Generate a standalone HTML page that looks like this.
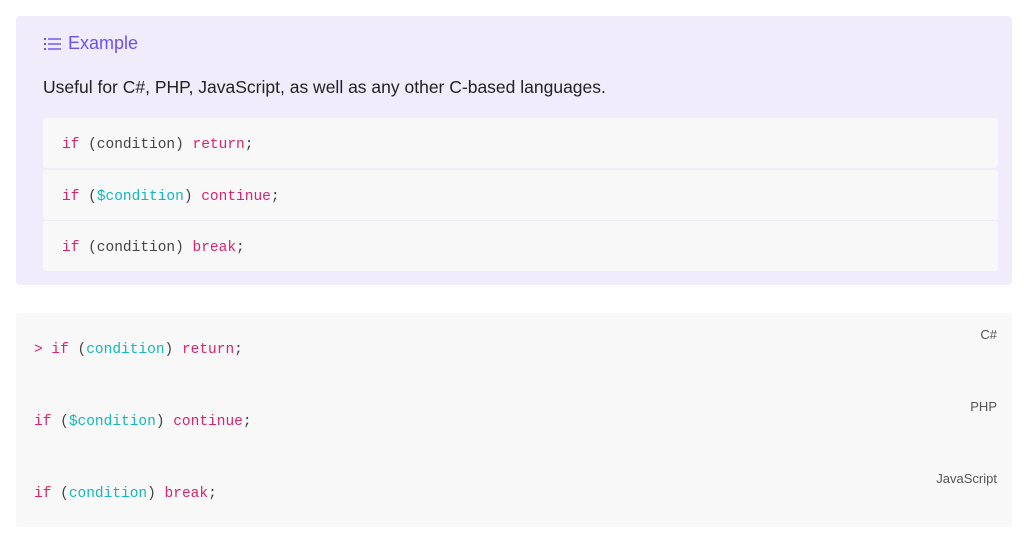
<!DOCTYPE html>
<html><head><style>
body{margin:0;background:#fff;width:1024px;height:541px;overflow:hidden;font-family:"Liberation Sans",sans-serif;}
.adm{position:absolute;left:16px;top:16px;width:996px;height:269px;background:#f0ecfb;border-radius:4px;}
.title{position:absolute;left:28px;top:17px;font-size:18px;color:#6e4ff0;display:flex;align-items:center;gap:6px;}
.p{position:absolute;left:27px;top:61px;font-size:17.5px;color:#222;}
.cb{position:absolute;left:27px;width:955px;height:50px;background:#f8f8f8;border-radius:3px;}
.mono{font-family:"Liberation Mono",monospace;font-size:14.5px;white-space:pre;}
.cb .mono{position:absolute;left:19px;top:19px;}
.k{color:#d6246e}.d{color:#444}.c{color:#14b8b8}
.box{position:absolute;left:16px;top:313px;width:996px;height:214px;background:#f8f8f8;border-radius:4px;}
.row{position:absolute;left:0;width:996px;height:71px;}
.row .mono{position:absolute;left:18px;top:29px;}
.lab{position:absolute;right:15px;top:14px;font-size:13px;color:#555;}
</style></head><body>
<div class="adm">
 <div class="title"><svg width="18" height="14" viewBox="0 0 18 14"><g fill="#6e4ff0"><rect x="0" y="1" width="2" height="2"/><rect x="0" y="6" width="2" height="2"/><rect x="0" y="11" width="2" height="2"/><rect x="4" y="1.3" width="13" height="1.4"/><rect x="4" y="6.3" width="13" height="1.4"/><rect x="4" y="11.3" width="13" height="1.4"/></g></svg>Example</div>
 <div class="p">Useful for C#, PHP, JavaScript, as well as any other C-based languages.</div>
 <div class="cb" style="top:102px"><span class="mono"><span class="k">if</span><span class="d"> (condition) </span><span class="k">return</span><span class="d">;</span></span></div>
 <div class="cb" style="top:154px"><span class="mono"><span class="k">if</span><span class="d"> (</span><span class="c">$condition</span><span class="d">) </span><span class="k">continue</span><span class="d">;</span></span></div>
 <div class="cb" style="top:205px"><span class="mono"><span class="k">if</span><span class="d"> (condition) </span><span class="k">break</span><span class="d">;</span></span></div>
</div>
<div class="box">
 <div class="row" style="top:0"><span class="lab">C#</span><span class="mono"><span class="k">&gt; if</span><span class="d"> (</span><span class="c">condition</span><span class="d">) </span><span class="k">return</span><span class="d">;</span></span></div>
 <div class="row" style="top:72px"><span class="lab">PHP</span><span class="mono"><span class="k">if</span><span class="d"> (</span><span class="c">$condition</span><span class="d">) </span><span class="k">continue</span><span class="d">;</span></span></div>
 <div class="row" style="top:144px"><span class="lab">JavaScript</span><span class="mono"><span class="k">if</span><span class="d"> (</span><span class="c">condition</span><span class="d">) </span><span class="k">break</span><span class="d">;</span></span></div>
</div>
</body></html>
